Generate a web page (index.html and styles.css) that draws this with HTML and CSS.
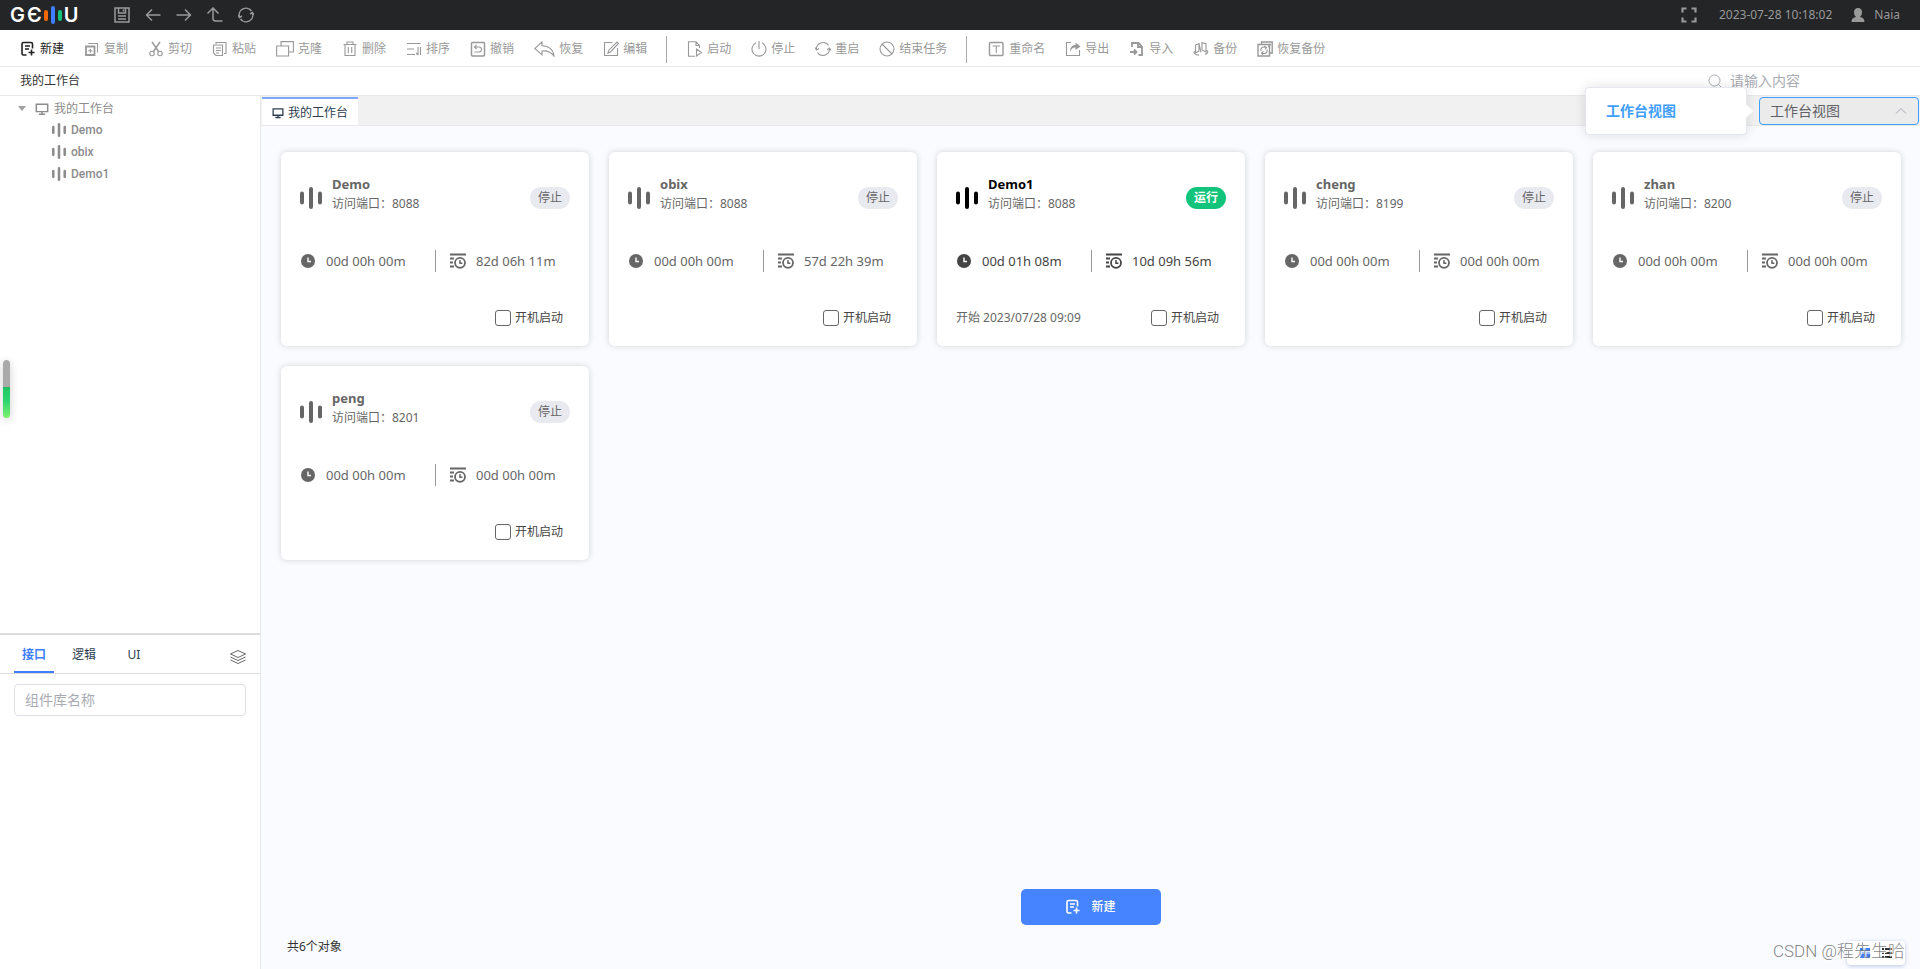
FILE: index.html
```html
<!DOCTYPE html>
<html lang="zh-CN">
<head>
<meta charset="utf-8">
<meta name="viewport" content="width=device-width, initial-scale=1">
<title>我的工作台</title>
<link rel="stylesheet" href="styles.css">
</head>
<body>
<svg class="sprite" aria-hidden="true">
  <symbol id="i-bars" viewBox="0 0 22 22"><path d="M2 6.500v9M11 2v18M20 6.500v9" fill="none" stroke="currentColor" stroke-width="4" stroke-linecap="round"/></symbol>
  <symbol id="i-new" viewBox="0 0 16 16"><path d="M6.500 14H3.500Q2 14 2 12.500V3Q2 1.500 3.500 1.500H11Q12.500 1.500 12.500 3V7.500M5 5h5M5 8h4M11.500 8.500v6M8.500 11.500h6" fill="none" stroke="currentColor" stroke-width="1.600"/></symbol>
  <symbol id="i-screen" viewBox="0 0 16 16"><path d="M1.500 2.500h13v8.500h-13zM8 11v3M4.500 14h7" fill="none" stroke="currentColor" stroke-width="1.700"/></symbol>
  <symbol id="i-clock" viewBox="0 0 14 14"><circle cx="7" cy="7" r="7" fill="currentColor"/><path d="M7 3.500V7.500H10" fill="none" stroke="#fff" stroke-width="1.400"/></symbol>
  <symbol id="i-total" viewBox="0 0 16 16"><path d="M0 1.500h16M0 5.500h4M0 9.500h3M0 13.500h4" fill="none" stroke="currentColor" stroke-width="1.800"/><circle cx="10" cy="9.800" r="5" fill="none" stroke="currentColor" stroke-width="1.800"/><path d="M10 7v3.200h2.500" fill="none" stroke="currentColor" stroke-width="1.500"/></symbol>
</svg>

<header class="topbar">
  <div class="logo" role="img" aria-label="GEMU"><span>G</span><span>Є</span><svg class="logo-bars" viewBox="0 0 18 18"><path d="M2 6v7" stroke="#f56a00"/><path d="M9 2v14" stroke="#3f7fff"/><path d="M16 6v7" stroke="#12c47b"/></svg><span>U</span></div>
  <nav class="quick" aria-label="快捷操作">
    <button aria-label="保存"><svg viewBox="0 0 16 16"><path d="M1 1h14v14H1zM4.500 1v5h7V1M9.500 2.500v2M4 9h8M4 12h8"/></svg></button>
    <button aria-label="后退"><svg viewBox="0 0 16 16"><path d="M15.500 8H1.500M7 2.500 1.500 8 7 13.500"/></svg></button>
    <button aria-label="前进"><svg viewBox="0 0 16 16"><path d="M.5 8h14M9 2.500 14.500 8 9 13.500"/></svg></button>
    <button aria-label="上一级"><svg viewBox="0 0 16 16"><path d="M.5 6.500 6 1l5.500 5.500M6 1v10.500Q6 14 8.500 14H15.500"/></svg></button>
    <button aria-label="刷新"><svg viewBox="0 0 16 16"><path d="M1.500 10A6.800 6.800 0 0 1 13.500 4M14.500 6A6.800 6.800 0 0 1 2.500 12M0 8l1.500 2.500L4 9M12 7l2.500-1.500L16 8"/></svg></button>
  </nav>
  <div class="account">
    <button aria-label="全屏"><svg viewBox="0 0 16 16"><path d="M1.500 5.500v-4h4M10.500 1.500h4v4M14.500 10.500v4h-4M5.500 14.500h-4v-4" stroke-width="2.200"/></svg></button>
    <time>2023-07-28 10:18:02</time>
    <span class="user"><svg viewBox="0 0 14 16"><path d="M7 1a4 4 0 0 1 4 4.500C11 8 9.500 9.500 8.800 10 12 10.500 13.500 12 13.500 15H.5C.5 12 2 10.500 5.200 10 4.500 9.500 3 8 3 5.500A4 4 0 0 1 7 1z" fill="currentColor" stroke="none"/></svg>Naia</span>
  </div>
</header>

<div class="toolbar" role="toolbar">
  <button class="tool active"><svg viewBox="0 0 16 16"><use href="#i-new"/></svg>新建</button>
  <button class="tool"><svg viewBox="0 0 16 16"><path d="M2 5.500h8.500V14H2z" stroke-width="1.800"/><path d="M5 3V2.500h8.500V11H13M4.300 9.700h4M6.300 7.700v4"/></svg>复制</button>
  <button class="tool"><svg viewBox="0 0 16 16"><path d="M4 .8 10.800 11M12 .8 5.200 11" stroke-width="1.500"/><circle cx="4" cy="12.500" r="2.200"/><circle cx="12" cy="12.500" r="2.200"/></svg>剪切</button>
  <button class="tool"><svg viewBox="0 0 16 16"><path d="M1.500 4h9v10.500H4L1.500 12zM4 3V1.500h10V12.500H12M4 7h5M4 9.500h5M4 12h3"/></svg>粘贴</button>
  <button class="tool"><svg class="wide" viewBox="0 0 18 16"><path d="M.6 5h12v10H.6zM5 5V.6h12.400V11H12.600"/></svg>克隆</button>
  <button class="tool"><svg viewBox="0 0 16 16"><path d="M1.500 3.500h13M5 3.500V1h6v2.500M3 3.500v11h10v-11M6.300 6v6M9.700 6v6"/></svg>删除</button>
  <button class="tool"><svg viewBox="0 0 16 16"><path d="M1 2.500h13.500M1 8h7M1 13.500h8M12 6v8M14.500 6v8M12 14l-2-2"/></svg>排序</button>
  <button class="tool"><svg viewBox="0 0 16 16"><rect x="1.500" y="1.500" width="13" height="13.500" rx="1" stroke-width="1.500"/><path d="M6.500 4 4.500 6l2 2M4.500 6H9a2.500 2.500 0 0 1 0 5H4.500"/></svg>撤销</button>
  <button class="tool"><svg class="wider" viewBox="0 0 21 16"><path d="M8 .8.8 7.500 8 13.800V10C13 9.500 17 11 20 15.200 19.500 9 15 5 8 4.800z"/></svg>恢复</button>
  <button class="tool"><svg viewBox="0 0 16 16"><path d="M9.500 1.500h-8v13h13V7M14 1l1.500 1.500-8 8.500-2.500 1 .8-2.800z"/></svg>编辑</button>
  <span class="divider"></span>
  <button class="tool"><svg viewBox="0 0 16 16"><path d="M8 15.300H1.500V.7H9L12.500 4.500V7M9 .7V4.500h3.500M9.500 8l5 3.500-5 3.500z"/></svg>启动</button>
  <button class="tool"><svg viewBox="0 0 16 16"><path d="M5 1.800a7 7 0 1 0 6 0M8 0v8"/></svg>停止</button>
  <button class="tool"><svg viewBox="0 0 16 16"><path d="M1.500 9A6.600 6.600 0 0 1 13.500 4.500M14.500 7A6.600 6.600 0 0 1 2.500 11.500M0 6.500 1.500 9 4 7.500M12 9l2.500-2L16 9.500"/></svg>重启</button>
  <button class="tool"><svg viewBox="0 0 16 16"><circle cx="8" cy="8" r="7"/><path d="M3 3 13 13"/></svg>结束任务</button>
  <span class="divider"></span>
  <button class="tool"><svg class="wide" viewBox="0 0 18 16"><rect x="2.500" y="1.500" width="13.500" height="13" rx="1" stroke-width="1.400"/><path d="M5.500 5h7.500M9.250 5v7"/></svg>重命名</button>
  <button class="tool"><svg viewBox="0 0 16 16"><path d="M6 1.500H1.500v13h13V9"/><path d="M5 10.500C5.300 6.500 7 4 10.500 4V1.500L15.500 5.500 10.500 9V6.500C8 6.300 6.500 8 5 10.500z" fill="currentColor" stroke="none"/></svg>导出</button>
  <button class="tool"><svg viewBox="0 0 16 16"><path d="M3 6V2h6.500L13 5.500V14H9.500M9 2v4h4M1 11h6M5 8.500 7.500 11 5 13.500" stroke-width="1.800"/></svg>导入</button>
  <button class="tool"><svg viewBox="0 0 16 16"><path d="M2.500 4 6 2.500V10L2.500 12zM9 1.500l4 1.500v8L9 9zM1.500 10C0 12 3 14.500 6 14M6 2.500l2 9M13 9c3 1 2 3.500-1 4.500"/></svg>备份</button>
  <button class="tool"><svg viewBox="0 0 16 16"><path d="M1 3.500h11.500V15H1zM4.500 3.500V1H15.200v11H12.500" stroke-width="1.400"/><path d="M4 10c-1-3 2-5 5-3.500M7.500 5 9.500 6.500 8 8.500M10 8.500c1 3-2 5-5 3.500M6.500 10.500 4.500 12 6 14M11 6l3-3"/></svg>恢复备份</button>
</div>

<div class="pathbar">
  <span>我的工作台</span>
  <label class="search"><svg viewBox="0 0 14 14" aria-hidden="true"><circle cx="6.500" cy="6.500" r="5.500"/><path d="m10.500 10.500 2.500 2.500"/></svg><input type="text" placeholder="请输入内容" aria-label="搜索"></label>
</div>

<div class="workspace">
  <aside class="sidebar">
    <div class="tree">
      <div class="tree-root"><span class="caret"></span><svg viewBox="0 0 16 16"><use href="#i-screen"/></svg>我的工作台</div>
      <ul>
        <li><svg viewBox="0 0 22 22"><use href="#i-bars"/></svg>Demo</li>
        <li><svg viewBox="0 0 22 22"><use href="#i-bars"/></svg>obix</li>
        <li><svg viewBox="0 0 22 22"><use href="#i-bars"/></svg>Demo1</li>
      </ul>
    </div>
    <section class="library">
      <div class="library-tabs">
        <button class="selected">接口</button><button>逻辑</button><button>UI</button>
        <button class="layers" aria-label="图层"><svg viewBox="0 0 16 16"><path d="M8 1.500 15.500 5 8 8.500.5 5zM.5 8 8 11.500 15.500 8M.5 11 8 14.500 15.500 11"/></svg></button>
      </div>
      <input class="library-search" type="text" placeholder="组件库名称" aria-label="组件库名称">
    </section>
  </aside>

  <main class="main">
    <div class="tabbar">
      <button class="tab"><svg viewBox="0 0 16 16"><use href="#i-screen"/></svg>我的工作台</button>
      <div class="view-select">
        <select aria-label="视图"><option>工作台视图</option></select>
        <svg viewBox="0 0 12 12" aria-hidden="true"><path d="m1 8.500 5-5 5 5"/></svg>
        <div class="popup"><button>工作台视图</button></div>
      </div>
    </div>

    <div class="cards">
      <article class="card">
        <div class="card-head"><svg><use href="#i-bars"/></svg><div class="info"><h2>Demo</h2><p>访问端口：8088</p></div><span class="badge">停止</span></div>
        <div class="times"><span><svg class="clock"><use href="#i-clock"/></svg>00d 00h 00m</span><span><svg><use href="#i-total"/></svg>82d 06h 11m</span></div>
        <div class="card-foot"><span></span><label><input type="checkbox">开机启动</label></div>
      </article>
      <article class="card">
        <div class="card-head"><svg><use href="#i-bars"/></svg><div class="info"><h2>obix</h2><p>访问端口：8088</p></div><span class="badge">停止</span></div>
        <div class="times"><span><svg class="clock"><use href="#i-clock"/></svg>00d 00h 00m</span><span><svg><use href="#i-total"/></svg>57d 22h 39m</span></div>
        <div class="card-foot"><span></span><label><input type="checkbox">开机启动</label></div>
      </article>
      <article class="card running">
        <div class="card-head"><svg><use href="#i-bars"/></svg><div class="info"><h2>Demo1</h2><p>访问端口：8088</p></div><span class="badge">运行</span></div>
        <div class="times"><span><svg class="clock"><use href="#i-clock"/></svg>00d 01h 08m</span><span><svg><use href="#i-total"/></svg>10d 09h 56m</span></div>
        <div class="card-foot"><span>开始 2023/07/28 09:09</span><label><input type="checkbox">开机启动</label></div>
      </article>
      <article class="card">
        <div class="card-head"><svg><use href="#i-bars"/></svg><div class="info"><h2>cheng</h2><p>访问端口：8199</p></div><span class="badge">停止</span></div>
        <div class="times"><span><svg class="clock"><use href="#i-clock"/></svg>00d 00h 00m</span><span><svg><use href="#i-total"/></svg>00d 00h 00m</span></div>
        <div class="card-foot"><span></span><label><input type="checkbox">开机启动</label></div>
      </article>
      <article class="card">
        <div class="card-head"><svg><use href="#i-bars"/></svg><div class="info"><h2>zhan</h2><p>访问端口：8200</p></div><span class="badge">停止</span></div>
        <div class="times"><span><svg class="clock"><use href="#i-clock"/></svg>00d 00h 00m</span><span><svg><use href="#i-total"/></svg>00d 00h 00m</span></div>
        <div class="card-foot"><span></span><label><input type="checkbox">开机启动</label></div>
      </article>
      <article class="card">
        <div class="card-head"><svg><use href="#i-bars"/></svg><div class="info"><h2>peng</h2><p>访问端口：8201</p></div><span class="badge">停止</span></div>
        <div class="times"><span><svg class="clock"><use href="#i-clock"/></svg>00d 00h 00m</span><span><svg><use href="#i-total"/></svg>00d 00h 00m</span></div>
        <div class="card-foot"><span></span><label><input type="checkbox">开机启动</label></div>
      </article>
    </div>

    <button class="create"><svg viewBox="0 0 16 16"><use href="#i-new"/></svg>新建</button>
    <footer class="statusbar">
      <span>共6个对象</span>
      <div class="layout-switch">
        <button class="on" aria-label="网格"><svg viewBox="0 0 10 10"><path d="M0 0h4.500v4.500H0zM5.500 0H10v4.500H5.500zM0 5.500h4.500V10H0zM5.500 5.500H10V10H5.500z"/></svg></button>
        <button aria-label="列表"><svg viewBox="0 0 10 10"><path d="M0 0h2v2H0zM3 0h7v2H3zM0 4h2v2H0zM3 4h7v2H3zM0 8h2v2H0zM3 8h7v2H3z"/></svg></button>
      </div>
    </footer>
  </main>
</div>
<div class="meter" aria-hidden="true"></div>
<div class="watermark">CSDN @程先生哈</div>
</body>
</html>
```
FILE: styles.css
```css
* { box-sizing: border-box; }

body {
  margin: 0;
  height: 100vh;
  display: flex;
  flex-direction: column;
  overflow: hidden;
  background: #fff;
  color: #333;
  font: 12px/18px "Noto Sans", "Noto Sans CJK SC", sans-serif;
}

button, input, select { font: inherit; color: inherit; }
button { border: 0; padding: 0; background: none; cursor: pointer; }
svg { flex: none; fill: none; stroke: currentColor; }
.sprite { position: absolute; width: 0; height: 0; }

.topbar {
  flex: none;
  display: flex;
  align-items: center;
  height: 30px;
  padding: 0 20px 0 10px;
  background: #242527;
  color: #999;
}
.logo {
  display: flex;
  align-items: center;
  gap: 2px;
  width: 70px;
  color: #fff;
  font: 600 20px/30px Inter, "Noto Sans", sans-serif;
}
.logo-bars { width: 18px; height: 18px; stroke-width: 4; stroke-linecap: round; }
.quick { display: flex; gap: 15px; margin-left: 34px; }
.quick button { display: flex; }
.quick svg { width: 16px; height: 16px; stroke-width: 1.5; }
.account { display: flex; align-items: center; margin-left: auto; }
.account button { display: flex; margin-right: 22px; }
.account svg { width: 16px; height: 16px; }
.user { display: flex; align-items: center; gap: 8px; margin-left: 18px; }

.toolbar {
  flex: none;
  display: flex;
  align-items: center;
  height: 37px;
  padding: 2px 10px 0;
  border-bottom: 1px solid #ebebeb;
}
.tool { display: flex; align-items: center; gap: 4px; padding: 0 10px; color: #999; white-space: nowrap; }
.tool svg { width: 16px; height: 16px; stroke-width: 1.1; }
.tool .wide { width: 18px; }
.tool .wider { width: 21px; }
.tool.active { color: #222; }
.divider { width: 1px; height: 27px; margin: 0 10px 0 9px; background: #aaa; }

.pathbar {
  flex: none;
  display: flex;
  align-items: center;
  justify-content: space-between;
  height: 29px;
  padding: 0 20px;
  border-bottom: 1px solid #e8e8e8;
}
.search { display: flex; align-items: center; gap: 8px; color: #a8abb2; }
.search svg { width: 14px; height: 14px; }
.search input { width: 170px; height: 24px; padding: 0 0 2px; border: 0; outline: 0; font-size: 14px; }
::placeholder { color: #a8abb2; opacity: 1; }

.workspace { flex: 1; display: flex; min-height: 0; }
.sidebar { flex: none; display: flex; flex-direction: column; width: 261px; border-right: 1px solid #e8e8e8; }
.tree { flex: 1; color: #8c8c8c; }
.tree-root { display: flex; align-items: center; height: 23px; padding: 2px 0 0 18px; }
.tree-root svg { width: 14px; height: 14px; margin: 0 5px 0 9px; }
.caret { border: 4px solid transparent; border-top: 5px solid #a0a0a0; border-bottom: 0; }
.tree ul { margin: 0; padding: 0; list-style: none; }
.tree li { display: flex; align-items: center; gap: 5px; height: 22px; padding-left: 52px; font-family: Roboto, "Noto Sans", sans-serif; font-weight: 500; }
.tree li svg { width: 14px; height: 14px; }

.library { flex: none; height: 336px; border-top: 2px solid #dcdcdc; }
.library-tabs { display: flex; align-items: stretch; height: 39px; padding: 0 14px; border-bottom: 1px solid #d8dadf; }
.library-tabs button { width: 40px; margin-right: 10px; padding-top: 4px; border-bottom: 2px solid transparent; color: #2c3e50; }
.library-tabs .selected { border-color: #3f7fff; color: #3f7fff; font-weight: 700; }
.library-tabs .layers { display: flex; align-items: center; width: 16px; margin: 0 0 0 auto; padding-top: 8px; color: #666; }
.layers svg { width: 16px; height: 16px; }
.library-search { display: block; width: 232px; height: 32px; margin: 10px 14px; padding: 0 10px 2px; border: 1px solid #dcdfe6; border-radius: 4px; outline: 0; font-size: 14px; }

.main { flex: 1; display: flex; flex-direction: column; min-width: 0; background: #fafbff; }
.tabbar {
  flex: none;
  display: flex;
  justify-content: space-between;
  height: 30px;
  padding: 1px 1px 0;
  border-bottom: 1px solid #e8e8e8;
  background: #f1f1f1;
}
.tab { display: flex; align-items: center; gap: 4px; padding: 2px 10px 0; border-top: 2px solid #7ea8ff; background: #fff; color: #2c3e50; }
.tab svg { width: 12px; height: 12px; }
.view-select { position: relative; width: 160px; height: 28px; }
.view-select select {
  width: 100%;
  height: 100%;
  padding: 0 10px;
  border: 1px solid #409eff;
  border-radius: 4px;
  outline: 0;
  background: #ebebeb;
  color: #606266;
  font-size: 14px;
  appearance: none;
}
.view-select > svg { position: absolute; top: 8px; right: 12px; width: 12px; height: 12px; color: #a8abb2; }
.popup {
  position: absolute;
  top: -10px;
  right: 172px;
  width: 162px;
  height: 48px;
  padding: 0 20px;
  border: 1px solid #e4e7ed;
  border-radius: 4px;
  background: #fff;
  box-shadow: 0 0 12px rgba(0, 0, 0, .12);
}
.popup::after { content: ""; position: absolute; top: 18px; right: -5px; width: 10px; height: 10px; background: #fff; transform: rotate(45deg); }
.popup button { height: 100%; color: #409eff; font-size: 14px; font-weight: 700; }

.cards { flex: 1; display: grid; grid-template-columns: repeat(auto-fill, minmax(300px, 1fr)); align-content: start; gap: 20px; padding: 26px 19px 20px 20px; }
.card { padding: 23px 19px 20px; border-radius: 6px; background: #fff; box-shadow: 0 0 6px rgba(0, 0, 0, .16); color: #666; }
.card-head { display: flex; align-items: center; }
.card-head svg { width: 22px; height: 22px; }
.info { flex: 1; padding: 0 0 8px 10px; }
.info h2, .info p { margin: 0; font-size: 12px; line-height: 18px; }
.info h2 { margin-bottom: 2px; font-size: 13px; }
.badge { width: 40px; border-radius: 11px; background: #e9eaf0; line-height: 22px; text-align: center; }
.times { display: grid; grid-template-columns: 1fr 1fr; margin-top: 29px; font-size: 13px; line-height: 22px; }
.times span { display: flex; align-items: center; gap: 11px; }
.times span + span { gap: 10px; padding-left: 14px; border-left: 1px solid #999; }
.times svg { width: 16px; height: 16px; stroke: none; }
.times .clock { width: 14px; height: 14px; margin-left: 1px; }
.card-foot { display: flex; align-items: center; justify-content: space-between; height: 16px; margin-top: 38px; padding-right: 7px; }
.card-foot label { display: flex; align-items: center; gap: 4px; color: #444; }
.card-foot input { width: 16px; height: 16px; margin: 0; border: 1px solid #666; border-radius: 3px; background: #fff; appearance: none; }
.running .card-head svg, .running h2 { color: #000; }
.running .badge { background: #12c47b; color: #fff; font-weight: 700; }
.running .times { color: #444; }

.create { flex: none; align-self: center; display: flex; align-items: center; justify-content: center; gap: 10px; width: 140px; height: 36px; border-radius: 5px; background: #4583ff; color: #fff; font-weight: 500; }
.create svg { width: 16px; height: 16px; }
.statusbar { flex: none; display: flex; align-items: center; justify-content: space-between; height: 44px; padding: 0 15px 0 26px; }
.layout-switch { display: flex; align-items: center; justify-content: center; gap: 12px; width: 58px; height: 24px; margin-top: 12px; border-radius: 4px; background: #fff; box-shadow: 0 1px 4px rgba(60, 100, 180, .35); }
.layout-switch button { display: flex; }
.layout-switch svg { width: 10px; height: 10px; fill: currentColor; stroke: none; }
.layout-switch .on { color: #3f7fff; }

.meter {
  position: absolute;
  top: 360px;
  left: 3px;
  width: 7px;
  height: 58px;
  border-radius: 4px;
  background: linear-gradient(#aaa 46%, #1fb95c 46%, #22cb66 52%, #2bd56f 70%, #7cf06f);
  box-shadow: 0 2px 8px rgba(0, 0, 0, .2);
}
.watermark { position: absolute; right: 15px; bottom: 5px; color: rgba(110, 110, 110, .85); font: 300 17px/26px Roboto, "Noto Sans CJK SC", sans-serif; text-shadow: 1px 1px 0 #fff; pointer-events: none; }
```
